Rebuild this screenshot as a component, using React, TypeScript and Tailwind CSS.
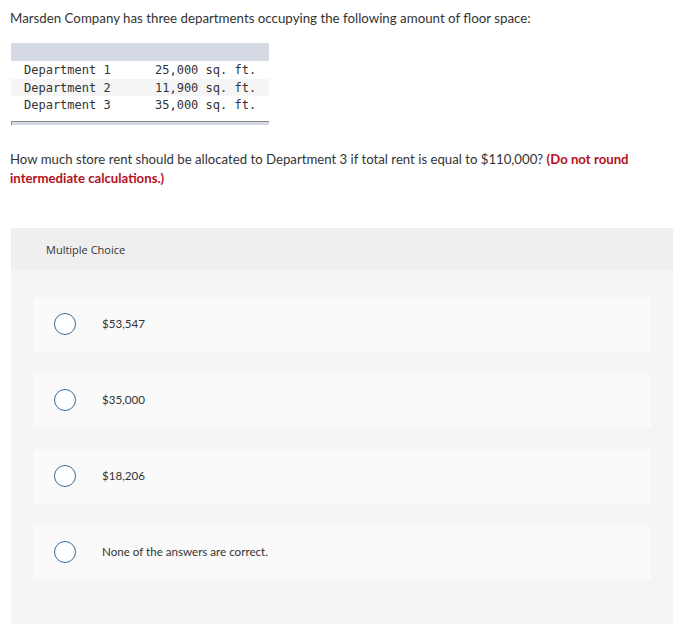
import React from "react";

const rows = [
  ["Department 1", "25,000 sq. ft."],
  ["Department 2", "11,900 sq. ft."],
  ["Department 3", "35,000 sq. ft."],
];

const choices = ["$53,547", "$35,000", "$18,206", "None of the answers are correct."];

export default function App() {
  return (
    <div className="min-h-[632px] w-[681px] bg-white text-[#333]" style={{ fontFamily: "Lato, 'Open Sans', sans-serif" }}>
      <div className="pl-[10px] pt-[9px] text-[13.3px] leading-[18px]">
        Marsden Company has three departments occupying the following amount of floor space:
      </div>
      <div className="ml-[11px] mt-[16px] w-[258px] text-[12px] leading-[17px]" style={{ fontFamily: "'DejaVu Sans Mono', 'Liberation Mono', monospace" }}>
        <div className="h-[18px] bg-[#d5d9e3]" />
        {rows.map((r, i) => (
          <div key={i} className={`flex h-[17.5px] items-center pt-[2px] ${i === 1 ? "bg-[#f5f5f5]" : "bg-white"}`}>
            <div className="w-[144px] pl-[13px]">{r[0]}</div>
            <div>{r[1]}</div>
          </div>
        ))}
        <div className="mt-[7px] h-[4px] border-l border-t border-[#8c8c8c] bg-[#d5d9e3]" />
      </div>
      <div className="mt-[25px] pl-[10px] pr-[40px] text-[13.2px] leading-[19px]">
        How much store rent should be allocated to Department 3 if total rent is equal to $110,000? <span className="font-bold text-[#b5121b]">(Do not round intermediate calculations.)</span>
      </div>
      <div className="ml-[11px] mt-[40px] w-[662px] overflow-hidden rounded-[2px] bg-[#f5f5f5]">
        <div className="flex h-[42px] items-center bg-[#efefef] pl-[35px] pt-[3px] text-[11px]" style={{ fontFamily: "'Open Sans', sans-serif" }}>
          Multiple Choice
        </div>
        <div className="flex flex-col gap-[21px] px-[22px] pb-[44px] pt-[27px]">
          {choices.map((c) => (
            <div key={c} className="flex h-[55px] items-center rounded-[3px] bg-[#fafafa]">
              <div className="ml-[21px] h-[22px] w-[22px] rounded-full border-[1.5px] border-[#3a6a96] bg-white" />
              <div className="ml-[26px] text-[11.6px]">{c}</div>
            </div>
          ))}
        </div>
      </div>
    </div>
  );
}
